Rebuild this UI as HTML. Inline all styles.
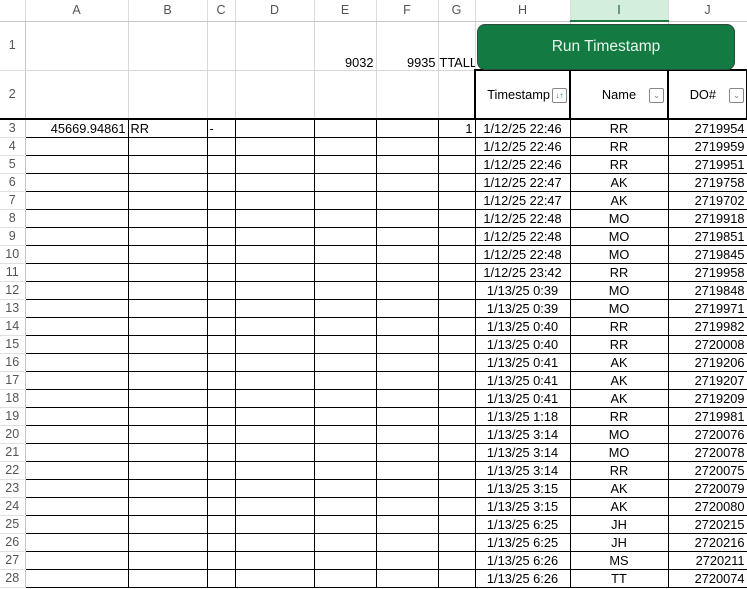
<!DOCTYPE html>
<html><head><meta charset="utf-8"><style>
body{margin:0;width:747px;height:589px;overflow:hidden;background:#fff;font-family:"Liberation Sans",sans-serif;font-size:12.8px;color:#000}
table{border-collapse:collapse;table-layout:fixed;position:absolute;left:0;top:0;width:747px}
td{padding:0 2px;white-space:nowrap;overflow:hidden;border:1px solid #000;height:17px;line-height:17px}
tr.h td{background:#fff;border:none;border-right:1px solid #ddd;border-bottom:1px solid #c8c8c8;text-align:center;color:#555;font-size:12.5px;height:20px}
td.rh{background:#fff;color:#555;text-align:center;border:none;border-right:1px solid #c8c8c8;border-bottom:1px solid #e0e0e0;font-size:12.5px;padding:0}
tr.t td{border:1px solid #d8d8d8}
tr.t td.rh{border:none;border-right:1px solid #c8c8c8;border-bottom:1px solid #e0e0e0}
.r{text-align:right}.c{text-align:center}
.btn{position:absolute;left:477px;top:24px;width:256px;height:44px;background:#137a42;border:1px solid #2d4a3a;border-radius:8px;color:#e8f5ec;font-size:15.5px;text-align:center;line-height:44px}
.dd{display:inline-block;width:13px;height:13px;border:1px solid #888;border-radius:2px;vertical-align:middle;position:absolute;font-size:8px;line-height:13px;text-align:center;color:#777;background:#fff}
</style></head><body>
<table>
<colgroup><col style="width:25px"><col style="width:103px"><col style="width:79px"><col style="width:28px"><col style="width:79px"><col style="width:62px"><col style="width:62px"><col style="width:37px"><col style="width:95px"><col style="width:98px"><col style="width:79px"></colgroup>
<tr class="h"><td style="background:#fff"></td><td>A</td><td>B</td><td>C</td><td>D</td><td>E</td><td>F</td><td>G</td><td>H</td><td style="background:#d3eedd;border-bottom:2px solid #1e7a45;color:#1e5a35">I</td><td>J</td></tr>
<tr class="t"><td class="rh" style="height:48px">1</td><td></td><td></td><td></td><td></td><td class="r" style="vertical-align:bottom;line-height:14px">9032</td><td class="r" style="vertical-align:bottom;line-height:14px">9935</td><td style="vertical-align:bottom;line-height:14px;padding:0 0 0 1px">TTALLU</td><td></td><td></td><td></td></tr>
<tr class="t"><td class="rh" style="height:47px">2</td><td></td><td></td><td></td><td></td><td></td><td></td><td style="border-right:2px solid #000"></td>
<td class="r" style="border:2px solid #000;border-bottom:2px solid #000;position:relative;padding-right:19px">Timestamp<span class="dd" style="right:2px;top:17px;color:#1a7a40">&#8595;&#8593;</span></td>
<td class="c" style="border:2px solid #000;position:relative">Name<span class="dd" style="right:3px;top:17px">&#8964;</span></td>
<td class="r" style="border:2px solid #000;position:relative;padding-right:30px">DO#<span class="dd" style="right:2px;top:17px">&#8964;</span></td></tr>
<tr style="border-top:2px solid #000"><td class="rh" style="height:17px">3</td><td class="r">45669.94861</td><td>RR</td><td>-</td><td></td><td></td><td></td><td class="r">1</td><td class="c">1/12/25 22:46</td><td class="c">RR</td><td class="r">2719954</td></tr>
<tr><td class="rh">4</td><td></td><td></td><td></td><td></td><td></td><td></td><td></td><td class="c">1/12/25 22:46</td><td class="c">RR</td><td class="r">2719959</td></tr>
<tr><td class="rh">5</td><td></td><td></td><td></td><td></td><td></td><td></td><td></td><td class="c">1/12/25 22:46</td><td class="c">RR</td><td class="r">2719951</td></tr>
<tr><td class="rh">6</td><td></td><td></td><td></td><td></td><td></td><td></td><td></td><td class="c">1/12/25 22:47</td><td class="c">AK</td><td class="r">2719758</td></tr>
<tr><td class="rh">7</td><td></td><td></td><td></td><td></td><td></td><td></td><td></td><td class="c">1/12/25 22:47</td><td class="c">AK</td><td class="r">2719702</td></tr>
<tr><td class="rh">8</td><td></td><td></td><td></td><td></td><td></td><td></td><td></td><td class="c">1/12/25 22:48</td><td class="c">MO</td><td class="r">2719918</td></tr>
<tr><td class="rh">9</td><td></td><td></td><td></td><td></td><td></td><td></td><td></td><td class="c">1/12/25 22:48</td><td class="c">MO</td><td class="r">2719851</td></tr>
<tr><td class="rh">10</td><td></td><td></td><td></td><td></td><td></td><td></td><td></td><td class="c">1/12/25 22:48</td><td class="c">MO</td><td class="r">2719845</td></tr>
<tr><td class="rh">11</td><td></td><td></td><td></td><td></td><td></td><td></td><td></td><td class="c">1/12/25 23:42</td><td class="c">RR</td><td class="r">2719958</td></tr>
<tr><td class="rh">12</td><td></td><td></td><td></td><td></td><td></td><td></td><td></td><td class="c">1/13/25 0:39</td><td class="c">MO</td><td class="r">2719848</td></tr>
<tr><td class="rh">13</td><td></td><td></td><td></td><td></td><td></td><td></td><td></td><td class="c">1/13/25 0:39</td><td class="c">MO</td><td class="r">2719971</td></tr>
<tr><td class="rh">14</td><td></td><td></td><td></td><td></td><td></td><td></td><td></td><td class="c">1/13/25 0:40</td><td class="c">RR</td><td class="r">2719982</td></tr>
<tr><td class="rh">15</td><td></td><td></td><td></td><td></td><td></td><td></td><td></td><td class="c">1/13/25 0:40</td><td class="c">RR</td><td class="r">2720008</td></tr>
<tr><td class="rh">16</td><td></td><td></td><td></td><td></td><td></td><td></td><td></td><td class="c">1/13/25 0:41</td><td class="c">AK</td><td class="r">2719206</td></tr>
<tr><td class="rh">17</td><td></td><td></td><td></td><td></td><td></td><td></td><td></td><td class="c">1/13/25 0:41</td><td class="c">AK</td><td class="r">2719207</td></tr>
<tr><td class="rh">18</td><td></td><td></td><td></td><td></td><td></td><td></td><td></td><td class="c">1/13/25 0:41</td><td class="c">AK</td><td class="r">2719209</td></tr>
<tr><td class="rh">19</td><td></td><td></td><td></td><td></td><td></td><td></td><td></td><td class="c">1/13/25 1:18</td><td class="c">RR</td><td class="r">2719981</td></tr>
<tr><td class="rh">20</td><td></td><td></td><td></td><td></td><td></td><td></td><td></td><td class="c">1/13/25 3:14</td><td class="c">MO</td><td class="r">2720076</td></tr>
<tr><td class="rh">21</td><td></td><td></td><td></td><td></td><td></td><td></td><td></td><td class="c">1/13/25 3:14</td><td class="c">MO</td><td class="r">2720078</td></tr>
<tr><td class="rh">22</td><td></td><td></td><td></td><td></td><td></td><td></td><td></td><td class="c">1/13/25 3:14</td><td class="c">RR</td><td class="r">2720075</td></tr>
<tr><td class="rh">23</td><td></td><td></td><td></td><td></td><td></td><td></td><td></td><td class="c">1/13/25 3:15</td><td class="c">AK</td><td class="r">2720079</td></tr>
<tr><td class="rh">24</td><td></td><td></td><td></td><td></td><td></td><td></td><td></td><td class="c">1/13/25 3:15</td><td class="c">AK</td><td class="r">2720080</td></tr>
<tr><td class="rh">25</td><td></td><td></td><td></td><td></td><td></td><td></td><td></td><td class="c">1/13/25 6:25</td><td class="c">JH</td><td class="r">2720215</td></tr>
<tr><td class="rh">26</td><td></td><td></td><td></td><td></td><td></td><td></td><td></td><td class="c">1/13/25 6:25</td><td class="c">JH</td><td class="r">2720216</td></tr>
<tr><td class="rh">27</td><td></td><td></td><td></td><td></td><td></td><td></td><td></td><td class="c">1/13/25 6:26</td><td class="c">MS</td><td class="r">2720211</td></tr>
<tr><td class="rh">28</td><td></td><td></td><td></td><td></td><td></td><td></td><td></td><td class="c">1/13/25 6:26</td><td class="c">TT</td><td class="r">2720074</td></tr>
</table>
<div class="btn">Run Timestamp</div>
</body></html>
